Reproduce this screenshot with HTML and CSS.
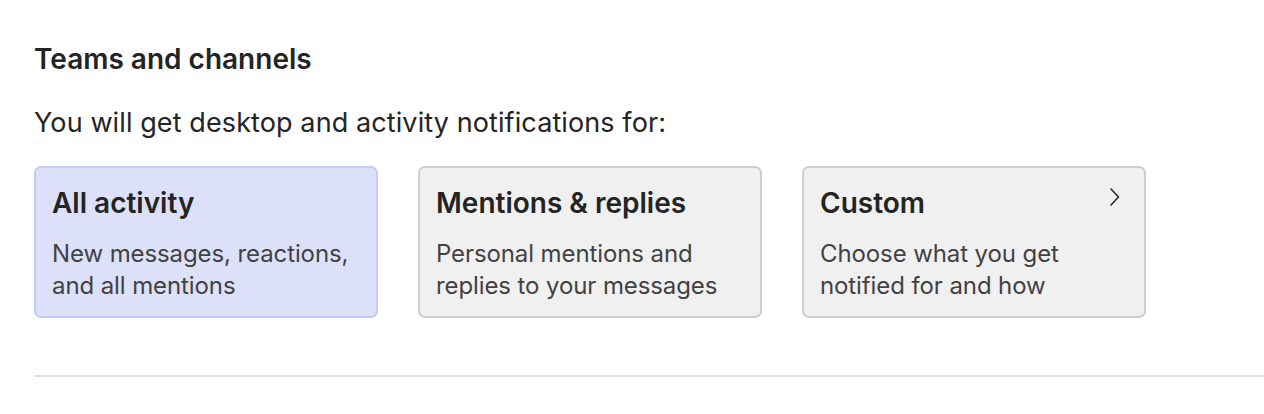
FILE: index.html
```html
<!DOCTYPE html>
<html lang="en">
<head>
<meta charset="utf-8">
<title>Teams and channels</title>
<link rel="stylesheet" href="styles.css">
</head>
<body>
<section class="section">
  <h2 class="heading">Teams and channels</h2>
  <p class="intro">You will get desktop and activity notifications for:</p>
  <div class="options">
    <div class="option option-selected">
      <div class="option-title">All activity</div>
      <div class="option-desc">New messages, reactions,<br>and all mentions</div>
    </div>
    <div class="option">
      <div class="option-title">Mentions &amp; replies</div>
      <div class="option-desc">Personal mentions and<br>replies to your messages</div>
    </div>
    <div class="option option-link">
      <div class="option-title">Custom</div>
      <div class="option-desc">Choose what you get<br>notified for and how</div>
      <svg class="chevron" width="10" height="18" viewBox="0 0 10 18" aria-hidden="true">
        <path d="M1 1 L8.5 9 L1 17" fill="none" stroke="#242424" stroke-width="1.5" stroke-linecap="round" stroke-linejoin="round"/>
      </svg>
    </div>
  </div>
  <hr class="divider">
</section>
</body>
</html>
```
FILE: styles.css
```css
html, body {
  margin: 0;
  padding: 0;
  background: #ffffff;
}
body {
  font-family: Inter, "Noto Sans", sans-serif;
  color: #242424;
}
.section {
  padding: 41px 0 0 34px;
}
.heading {
  margin: 0;
  font-size: 28px;
  font-weight: 600;
  line-height: 36px;
}
.intro {
  margin: 28px 0 0 0;
  font-size: 27px;
  line-height: 36px;
  letter-spacing: 0.1px;
  color: #242424;
}
.options {
  display: flex;
  gap: 40px;
  margin-top: 25px;
}
.option {
  position: relative;
  box-sizing: border-box;
  width: 344px;
  height: 152px;
  padding: 17px 16px 0;
  background: #f0f0f0;
  border: 2px solid #cdcdcd;
  border-radius: 7px;
}
.option-selected {
  background: #dde0f9;
  border-color: #c4cbf7;
}
.option-title {
  font-size: 28px;
  font-weight: 600;
  line-height: 36px;
}
.option-desc {
  margin-top: 17px;
  font-size: 24px;
  line-height: 32px;
  letter-spacing: -0.1px;
  color: #424242;
}
.chevron {
  position: absolute;
  top: 20px;
  right: 24px;
}
.divider {
  margin: 57px 0 0 0;
  border: 0;
  border-top: 2px solid #e0e0e0;
}
```
